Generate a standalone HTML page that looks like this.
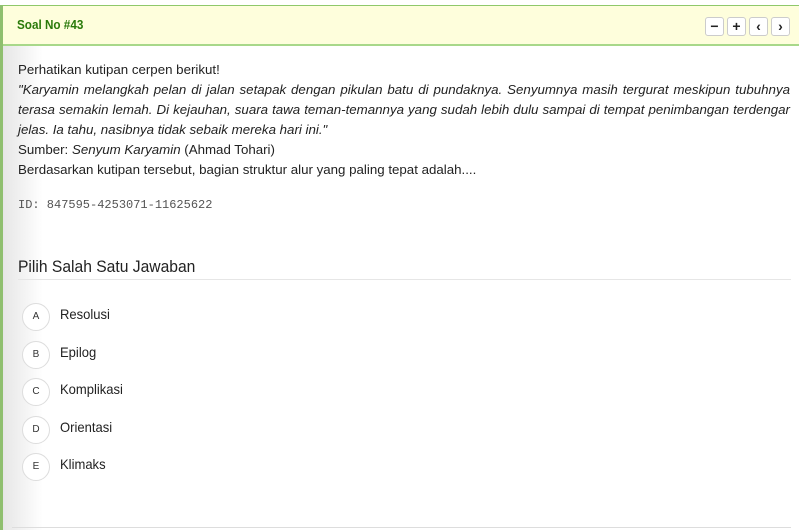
<!DOCTYPE html>
<html><head><meta charset="utf-8"><style>
*{margin:0;padding:0;box-sizing:border-box}
body{width:799px;height:530px;overflow:hidden;background:#fff;font-family:"Liberation Sans",sans-serif;color:#222;position:relative}
.lb{position:absolute;left:0;top:5px;bottom:0;width:3px;background:#8fbf6f}
.shade{position:absolute;left:3px;top:5px;bottom:0;width:40px;background:linear-gradient(to right,#e6e6e6,rgba(255,255,255,0))}
.hdr{position:absolute;left:3px;top:5px;right:0;height:41px;background:#fefedc;border-top:1px solid #8fc86a;border-bottom:2px solid #a8d88a}
.hdr .t{position:absolute;left:14px;top:11px;font-weight:bold;font-size:13px;color:#2a7a0a;transform:scaleX(.9);transform-origin:left}
.btns{position:absolute right:9px;top:11px;display:flex;gap:3px}
.btns{position:absolute;right:9px;top:11px;display:flex;gap:3px}
.btns span{width:19px;height:19px;border:1px solid #ccc;border-radius:3px;background:#fff;font-weight:bold;font-size:14px;line-height:17px;text-align:center;color:#222}
.q{position:absolute;left:18px;top:60px;width:772px;font-size:13.3px;line-height:20px}
.q i{font-style:italic}
.j{display:block;text-align:justify;text-align-last:justify}
.id{position:absolute;left:18px;top:198px;font-family:"Liberation Mono",monospace;font-size:12px;color:#555}
.h{position:absolute;left:18px;top:257px;font-size:17px;color:#222;transform:scaleX(.92);transform-origin:left}
.hl{position:absolute;left:18px;right:8px;top:279px;height:1px;background:#e6e6e6}
.opt{position:absolute;left:22px;font-size:14px}
.opt .c{position:absolute;left:0;top:0;width:28px;height:28px;border:1px solid #ddd;border-radius:50%;font-size:10px;text-align:center;line-height:26px;color:#333;background:#fff}
.opt .l{position:absolute;left:38px;top:3px;white-space:nowrap;transform:scaleX(.93);transform-origin:left}
.bl{position:absolute;left:12px;right:8px;top:527px;height:1px;background:#ddd}
</style></head><body>
<div class="shade"></div><div class="lb"></div>
<div class="hdr"><div class="t">Soal No #43</div>
<div class="btns"><span>−</span><span>+</span><span>‹</span><span>›</span></div></div>
<div class="q">
<p>Perhatikan kutipan cerpen berikut!</p>
<p><i><span class="j">"Karyamin melangkah pelan di jalan setapak dengan pikulan batu di pundaknya. Senyumnya masih tergurat meskipun tubuhnya</span><span class="j">terasa semakin lemah. Di kejauhan, suara tawa teman-temannya yang sudah lebih dulu sampai di tempat penimbangan terdengar</span>jelas. Ia tahu, nasibnya tidak sebaik mereka hari ini."</i></p>
<p>Sumber: <i>Senyum Karyamin</i> (Ahmad Tohari)</p>
<p>Berdasarkan kutipan tersebut, bagian struktur alur yang paling tepat adalah....</p>
</div>
<div class="id">ID: 847595-4253071-11625622</div>
<div class="h">Pilih Salah Satu Jawaban</div>
<div class="hl"></div>
<div class="opt" style="top:303px"><div class="c">A</div><div class="l">Resolusi</div></div>
<div class="opt" style="top:341px"><div class="c">B</div><div class="l">Epilog</div></div>
<div class="opt" style="top:378px"><div class="c">C</div><div class="l">Komplikasi</div></div>
<div class="opt" style="top:416px"><div class="c">D</div><div class="l">Orientasi</div></div>
<div class="opt" style="top:453px"><div class="c">E</div><div class="l">Klimaks</div></div>
<div class="bl"></div>
</body></html>
